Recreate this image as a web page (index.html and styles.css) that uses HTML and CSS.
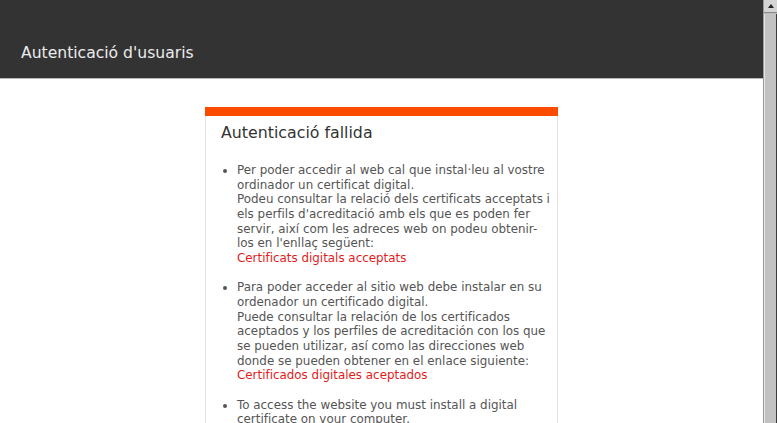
FILE: index.html
```html
<!DOCTYPE html>
<html lang="ca">
<head>
<meta charset="utf-8">
<title>Autenticació d'usuaris</title>
<link rel="stylesheet" href="styles.css">
</head>
<body>
<div class="page">
  <div class="main">
    <header class="topbar">
      <h1 class="site-title">Autenticació d'usuaris</h1>
    </header>
    <div class="content">
      <section class="card">
        <div class="card-accent"></div>
        <h2 class="card-title">Autenticació fallida</h2>
        <ul class="msg-list">
          <li>Per poder accedir al web cal que instal·leu al vostre ordinador un certificat digital.<br>Podeu consultar la relació dels certificats acceptats i els perfils d'acreditació amb els que es poden fer servir, així com les adreces web on podeu obtenir-los en l'enllaç següent:<br><a href="#">Certificats digitals acceptats</a></li>
          <li>Para poder acceder al sitio web debe instalar en su ordenador un certificado digital.<br>Puede consultar la relación de los certificados aceptados y los perfiles de acreditación con los que se pueden utilizar, así como las direcciones web donde se pueden obtener en el enlace siguiente:<br><a href="#">Certificados digitales aceptados</a></li>
          <li>To access the website you must install a digital certificate on your computer.<br>You can check the list of accepted certificates and accreditation profiles that can be used, as well as the web addresses where they can be obtained, at the following link:<br><a href="#">Accepted digital certificates</a></li>
        </ul>
      </section>
    </div>
  </div>
  <div class="scrollbar">
    <div class="sb-up"><span class="sb-arrow"></span></div>
    <div class="sb-track"><div class="sb-thumb"></div></div>
  </div>
</div>
</body>
</html>
```
FILE: styles.css
```css
html, body {
  margin: 0;
  padding: 0;
  height: 100%;
  overflow: hidden;
  background: #fff;
}
body {
  font-family: "DejaVu Sans", Verdana, sans-serif;
}
.page {
  display: flex;
  height: 423px;
}
.main {
  flex: 1;
  min-width: 0;
  overflow: hidden;
}
.topbar {
  height: 78px;
  background: #333333;
  border-bottom: 1px solid #b8b8b8;
  display: flex;
  align-items: flex-end;
  box-sizing: content-box;
}
.site-title {
  margin: 0 0 16px 21px;
  font-size: 15.6px;
  font-weight: normal;
  color: #ececec;
  line-height: 18px;
}
.content {
  display: flex;
  justify-content: center;
  padding-top: 28px;
}
.card {
  width: 351px;
  border: 1px solid #e2e2e2;
  border-top: none;
  background: #fff;
}
.card-accent {
  height: 9px;
  background: #fb4b00;
  margin: 0 -1px;
}
.card-title {
  margin: 7px 0 0 15px;
  font-size: 15.8px;
  font-weight: normal;
  color: #333;
  line-height: 20px;
}
.msg-list {
  margin: 20px 0 0 0;
  padding: 0 4px 0 31px;
  font-size: 11.9px;
  line-height: 14.67px;
  color: #555;
}
.msg-list li {
  margin-bottom: 14.67px;
}
.msg-list a {
  color: #e21b1b;
  text-decoration: none;
}
.scrollbar {
  width: 14px;
  flex: 0 0 14px;
  display: flex;
  flex-direction: column;
  background: #bdbdbd;
  border-left: 1px solid #9a9a9a;
  box-sizing: border-box;
}
.sb-up {
  height: 12px;
  background: #d4d4d4;
  border-bottom: 1px solid #8a8a8a;
  display: flex;
  align-items: center;
  justify-content: center;
}
.sb-arrow {
  width: 0;
  height: 0;
  border-left: 3px solid transparent;
  border-right: 3px solid transparent;
  border-bottom: 4px solid #222;
}
.sb-track {
  flex: 1;
  padding-top: 1px;
  display: flex;
}
.sb-thumb {
  flex: 1;
  background: #c2c2c2;
  border-left: 1px solid #e6e6e6;
  border-right: 1px solid #3a3a3a;
}
```
